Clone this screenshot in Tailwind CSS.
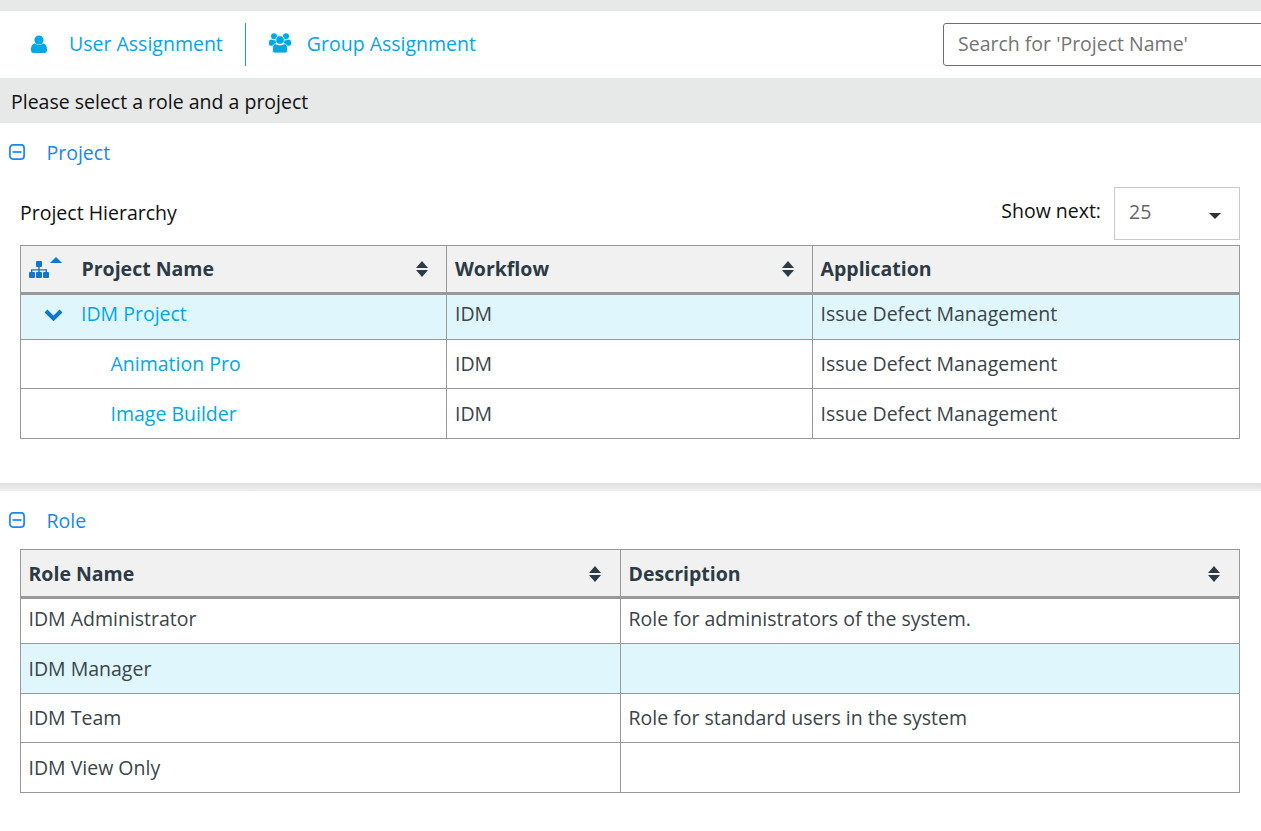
<!DOCTYPE html>
<html lang="en">
<head>
    <meta charset="UTF-8">
    <title>Project Assignment</title>
    <script src="https://cdn.jsdelivr.net/npm/@tailwindcss/browser@4"></script>
</head>
<body class="bg-white font-['Open_Sans',sans-serif] text-[19.5px] text-[#3b4449] overflow-hidden">
    <div class="h-[11px] bg-[#e7e8e8]"></div>

    <!-- Assignment tabs and search -->
    <div class="h-[67px] flex items-center text-[#00a7e7]">
        <svg class="ml-[31px] w-[16px] h-[18px] -mt-[2px] fill-[#00a7e7]" viewBox="0 0 16 18"><circle cx="8" cy="5" r="4.6"/><path d="M0 15c0-4 1.5-6.5 4-6.500 1.200.8 2.500 1.300 4 1.300s2.800-.5 4-1.300c2.500 0 4 2.500 4 6.500 0 1.800-1 3-2.600 3H2.600C1 18 0 16.800 0 15z"/></svg>
        <span class="ml-[22px] -mt-[2px]">User Assignment</span>
        <div class="ml-[22px] w-px h-[43px] bg-[#1a9ed4]"></div>
        <svg class="ml-[23px] w-[22px] h-[20px] -mt-[3px] fill-[#00a7e7]" viewBox="0 0 22 20"><circle cx="5" cy="3.300" r="3"/><circle cx="17" cy="3.300" r="3"/><path d="M0 9c0-1.500 1-2.500 2.200-2.500.8.500 1.700.7 2.800.7h2v5.500H1.500C.5 12.700 0 12 0 11zM22 9c0-1.500-1-2.500-2.200-2.500-.8.500-1.700.7-2.800.7h-2v5.500h5.500c1 0 1.500-.7 1.500-1.700z"/><circle cx="11" cy="7" r="4.300" stroke="#fff" stroke-width=".8"/><path d="M3.500 15c0-2.500 1.500-4.200 3.500-4.200.9.700 2.500 1.200 4 1.200s3.100-.5 4-1.200c2 0 3.500 1.700 3.500 4.200v2.500c0 1.500-.8 2.500-2.200 2.500H5.700c-1.400 0-2.200-1-2.200-2.500z" stroke="#fff" stroke-width=".8"/></svg>
        <span class="ml-[16px] -mt-[2px]">Group Assignment</span>
        <div class="ml-auto w-[330px] -mr-[12px] -mt-[1px] h-[43px] border border-[#6f6f6f] rounded-[3px] pl-[14px] flex items-center text-[#757575]">Search for 'Project Name'</div>
    </div>

    <div class="h-[45px] bg-[#e7e8e8] pl-[11px] pt-[2px] flex items-center text-[#111]">Please select a role and a project</div>

    <!-- Project section -->
    <div class="h-[60px] flex items-center text-[#1a87f0]">
        <svg class="ml-[9px] w-[16px] h-[16px] -mt-[2px]" viewBox="0 0 16 16" fill="none" stroke="#1a87f0" stroke-width="1.700"><rect x=".9" y=".9" width="14.200" height="14.200" rx="3"/><path d="M3.500 8h9"/></svg>
        <span class="ml-[21.5px]">Project</span>
    </div>

    <div class="mx-[20px] w-[1220px] h-[62px] flex justify-between">
        <span class="mt-[15px] text-[#111]">Project Hierarchy</span>
        <div class="flex items-start">
            <span class="mt-[13px] text-[#111]">Show next:</span>
            <div class="ml-[13px] mt-[4px] w-[126px] h-[53px] border border-[#cacaca] pl-[14px] pb-[4px] flex items-center justify-between pr-[18px] text-[#666]">
                <span>25</span>
                <span class="mt-[8px] w-0 h-0 border-x-[6px] border-x-transparent border-t-[6px] border-t-[#333]"></span>
            </div>
        </div>
    </div>

    <table class="ml-[20px] w-[1220px] table-fixed border-collapse">
        <colgroup><col class="w-[426px]"><col class="w-[366px]"><col></colgroup>
        <thead>
            <tr class="h-[48px] bg-[#f1f1f1] text-[#2b3a45] font-bold text-left">
                <th class="border border-[#999] border-b-[3px] pl-[7.5px] pr-[8px] font-bold">
                    <div class="flex items-center">
                        <svg class="w-[20px] h-[17px] fill-[#0f77d0] mt-[1px]" viewBox="0 0 20 17"><rect x="7" y="0" width="6" height="6" rx="1"/><rect x="0" y="11" width="6" height="6" rx="1"/><rect x="7" y="11" width="6" height="6" rx="1"/><rect x="14" y="11" width="6" height="6" rx="1"/><path d="M9.300 6h1.400v2.300H18V11h-1.400V9.600h-5.900V11H9.300V9.600H3.400V11H2V8.300h7.300z"/></svg>
                        <span class="self-start mt-[3px] ml-[1px] w-0 h-0 border-x-[6px] border-x-transparent border-b-[6px] border-b-[#0f77d0]"></span>
                        <span class="ml-[20px]">Project Name</span>
                        <span class="ml-auto mr-[10px] flex flex-col gap-[2px]"><i class="block w-0 h-0 border-x-[6px] border-x-transparent border-b-[7px] border-b-[#2b3a45]"></i><i class="block w-0 h-0 border-x-[6px] border-x-transparent border-t-[7px] border-t-[#2b3a45]"></i></span>
                    </div>
                </th>
                <th class="border border-[#999] border-b-[3px] px-[8px] font-bold">
                    <div class="flex items-center">
                        <span>Workflow</span>
                        <span class="ml-auto mr-[10px] flex flex-col gap-[2px]"><i class="block w-0 h-0 border-x-[6px] border-x-transparent border-b-[7px] border-b-[#2b3a45]"></i><i class="block w-0 h-0 border-x-[6px] border-x-transparent border-t-[7px] border-t-[#2b3a45]"></i></span>
                    </div>
                </th>
                <th class="border border-[#999] border-b-[3px] pl-[7.5px] font-bold">Application</th>
            </tr>
        </thead>
        <tbody>
            <tr class="h-[46px] bg-[#e0f6fd]">
                <td class="border border-[#999] pl-[7.5px] pr-[8px] pb-[7px]">
                    <div class="flex items-center text-[#00a7e7]">
                        <svg class="ml-[15.5px] w-[19px] h-[12px] mt-[3px]" viewBox="0 0 19 12" fill="none" stroke="#0f77d0" stroke-width="4"><path d="M2 2l7.500 7.500L17 2"/></svg>
                        <span class="ml-[18px]">IDM Project</span>
                    </div>
                </td>
                <td class="border border-[#999] px-[8px] pb-[7px]">IDM</td>
                <td class="border border-[#999] pl-[7.5px] pb-[7px]">Issue Defect Management</td>
            </tr>
            <tr class="h-[49px]">
                <td class="border border-[#999] pl-[89.5px] text-[#00a7e7]">Animation Pro</td>
                <td class="border border-[#999] px-[8px]">IDM</td>
                <td class="border border-[#999] pl-[7.5px]">Issue Defect Management</td>
            </tr>
            <tr class="h-[50px]">
                <td class="border border-[#999] pl-[89.5px] text-[#00a7e7]">Image Builder</td>
                <td class="border border-[#999] px-[8px]">IDM</td>
                <td class="border border-[#999] pl-[7.5px]">Issue Defect Management</td>
            </tr>
        </tbody>
    </table>

    <div class="mt-[44px] h-[8px] bg-gradient-to-b from-[#e0e0e0] to-[#efefef]"></div>

    <!-- Role section -->
    <div class="h-[58px] flex items-center text-[#1a87f0]">
        <svg class="ml-[9px] w-[16px] h-[16px]" viewBox="0 0 16 16" fill="none" stroke="#1a87f0" stroke-width="1.700"><rect x=".9" y=".9" width="14.200" height="14.200" rx="3"/><path d="M3.500 8h9"/></svg>
        <span class="ml-[21.5px] mt-[2px]">Role</span>
    </div>

    <table class="ml-[20px] w-[1220px] table-fixed border-collapse">
        <colgroup><col class="w-[600px]"><col></colgroup>
        <thead>
            <tr class="h-[48px] bg-[#f1f1f1] text-[#2b3a45] text-left">
                <th class="border border-[#999] border-b-[3px] pl-[7.5px] pr-[8px] pt-[2px] font-bold">
                    <div class="flex items-center">
                        <span>Role Name</span>
                        <span class="ml-auto mr-[11px] flex flex-col gap-[2px]"><i class="block w-0 h-0 border-x-[6px] border-x-transparent border-b-[7px] border-b-[#2b3a45]"></i><i class="block w-0 h-0 border-x-[6px] border-x-transparent border-t-[7px] border-t-[#2b3a45]"></i></span>
                    </div>
                </th>
                <th class="border border-[#999] border-b-[3px] pl-[7.5px] pr-[8px] pt-[2px] font-bold">
                    <div class="flex items-center">
                        <span>Description</span>
                        <span class="ml-auto mr-[11px] flex flex-col gap-[2px]"><i class="block w-0 h-0 border-x-[6px] border-x-transparent border-b-[7px] border-b-[#2b3a45]"></i><i class="block w-0 h-0 border-x-[6px] border-x-transparent border-t-[7px] border-t-[#2b3a45]"></i></span>
                    </div>
                </th>
            </tr>
        </thead>
        <tbody>
            <tr class="h-[46px]">
                <td class="border border-[#999] pl-[7.5px] pb-[5px]">IDM Administrator</td>
                <td class="border border-[#999] pl-[7.5px] pb-[5px]">Role for administrators of the system.</td>
            </tr>
            <tr class="h-[50px] bg-[#e0f6fd]">
                <td class="border border-[#999] pl-[7.5px]">IDM Manager</td>
                <td class="border border-[#999] pl-[7.5px]"></td>
            </tr>
            <tr class="h-[49px]">
                <td class="border border-[#999] pl-[7.5px]">IDM Team</td>
                <td class="border border-[#999] pl-[7.5px]">Role for standard users in the system</td>
            </tr>
            <tr class="h-[50px]">
                <td class="border border-[#999] pl-[7.5px]">IDM View Only</td>
                <td class="border border-[#999] pl-[7.5px]"></td>
            </tr>
        </tbody>
    </table>
</body>
</html>
